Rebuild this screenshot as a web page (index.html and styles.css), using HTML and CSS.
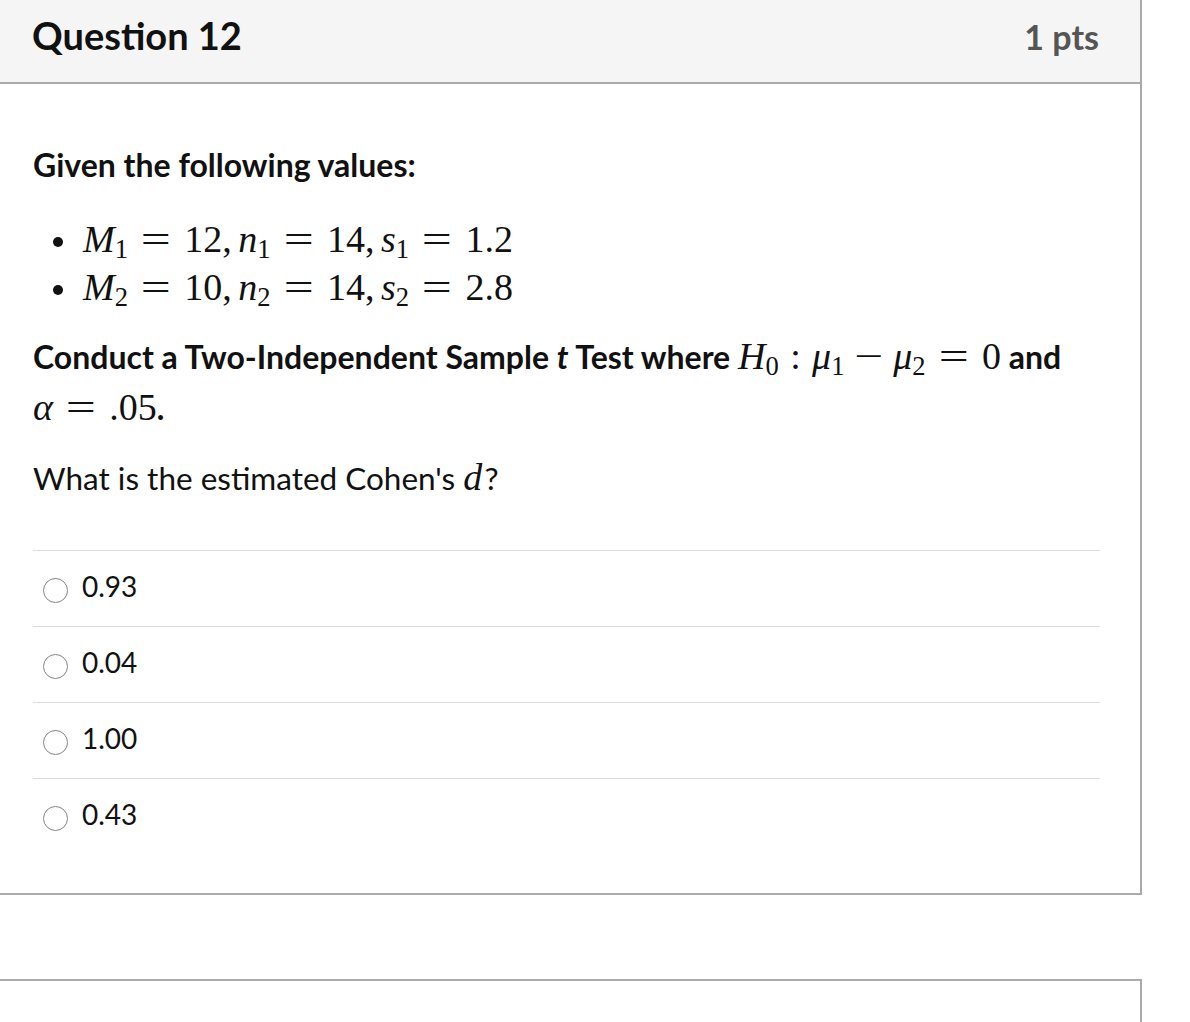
FILE: index.html
```html
<!DOCTYPE html>
<html lang="en">
<head>
<meta charset="utf-8">
<title>Question 12</title>
<link rel="stylesheet" href="styles.css">
</head>
<body>
<div class="card">
  <div class="card-header">
    <h2 class="q-title">Question 12</h2>
    <div class="q-pts">1 pts</div>
  </div>
  <div class="card-body">
    <p class="lead">Given the following values:</p>
    <ul class="values">
      <li><span class="m"><i>M</i><sub>1</sub><span class="rel">=</span>12,<span class="thin"></span><i>n</i><sub>1</sub><span class="rel">=</span>14,<span class="thin"></span><i>s</i><sub>1</sub><span class="rel">=</span>1.2</span></li>
      <li><span class="m"><i>M</i><sub>2</sub><span class="rel">=</span>10,<span class="thin"></span><i>n</i><sub>2</sub><span class="rel">=</span>14,<span class="thin"></span><i>s</i><sub>2</sub><span class="rel">=</span>2.8</span></li>
    </ul>
    <p class="lead task">Conduct a Two-Independent Sample <i class="it">t</i> Test where <span class="m"><i>H</i><sub>0</sub><span class="colon">:</span><i>μ</i><sub>1</sub><span class="bin">−</span><i>μ</i><sub>2</sub><span class="rel">=</span>0</span> and <span class="m"><i>α</i><span class="rel">=</span>.05</span>.</p>
    <p class="prompt">What is the estimated Cohen's <span class="m"><i class="ic">d</i></span>?</p>
    <div class="answers">
      <label class="answer"><span class="radio"></span><span class="answer-text">0.93</span></label>
      <label class="answer"><span class="radio"></span><span class="answer-text">0.04</span></label>
      <label class="answer"><span class="radio"></span><span class="answer-text">1.00</span></label>
      <label class="answer"><span class="radio"></span><span class="answer-text">0.43</span></label>
    </div>
  </div>
</div>
<div class="card card-next"></div>
</body>
</html>
```

FILE: styles.css
```css
html, body {
  margin: 0;
  padding: 0;
  background: #ffffff;
}

body {
  font-family: Lato, "Noto Sans", sans-serif;
  color: #111111;
  overflow: hidden;
}

.card {
  width: 1140px;
  margin: -2px 0 0 -2px;
  border: 2px solid #aaaaaa;
  background: #ffffff;
}

.card-header {
  height: 66px;
  padding: 16px 41px 0 32px;
  background: #f5f5f5;
  border-bottom: 2px solid #aaaaaa;
  display: flex;
  justify-content: space-between;
  align-items: baseline;
}

.q-title {
  margin: 0;
  font-size: 38px;
  line-height: 1;
  font-weight: 700;
  color: #111111;
}

.q-pts {
  font-size: 34px;
  line-height: 1;
  font-weight: 700;
  color: #555555;
}

.card-body {
  padding: 57px 40px 39px 33px;
}

.lead {
  margin: 0;
  font-size: 32px;
  line-height: 48px;
  font-weight: 700;
}

.values {
  margin: 27px 0 0;
  padding: 0 0 0 20px;
  list-style: none;
  font-size: 32px;
  line-height: 48px;
}

.values li::before {
  content: "";
  display: inline-block;
  width: 10px;
  height: 10px;
  border-radius: 50%;
  background: #111111;
  margin-right: 20px;
  vertical-align: 5px;
}

.task {
  margin-top: 19px;
  line-height: 51px;
}

.it {
  font-style: italic;
}

.prompt {
  margin: 21px 0 48px;
  font-size: 31.5px;
  line-height: 48px;
  font-weight: 400;
}

.m {
  font-family: "Liberation Serif", "Times New Roman", serif;
  font-size: 38px;
  font-weight: 400;
  line-height: 1;
  white-space: nowrap;
}

.m i {
  font-style: italic;
}

.m .ic {
  margin-right: 0.06em;
}

.m sub {
  font-size: 0.7em;
  line-height: 0;
  vertical-align: -0.22em;
}

.rel,
.bin {
  display: inline-block;
}

.rel {
  margin: 0 0.46em;
  transform: scaleX(1.4);
}

.bin {
  margin: 0 0.36em;
  transform: scaleX(1.35);
}

.colon {
  margin: 0 0.3em;
}

.thin {
  display: inline-block;
  width: 0.17em;
}

.answer {
  display: flex;
  align-items: center;
  height: 71px;
  padding-bottom: 4px;
  border-top: 1px solid #dcdcdc;
  cursor: pointer;
}

.radio {
  flex: none;
  width: 25px;
  height: 25px;
  box-sizing: border-box;
  border: 1.5px solid #858585;
  border-radius: 50%;
  margin: 7px 14px 0 10px;
}

.answer-text {
  font-size: 28px;
  line-height: 1.2;
}

.card-next {
  margin-top: 84px;
  height: 120px;
}
```
